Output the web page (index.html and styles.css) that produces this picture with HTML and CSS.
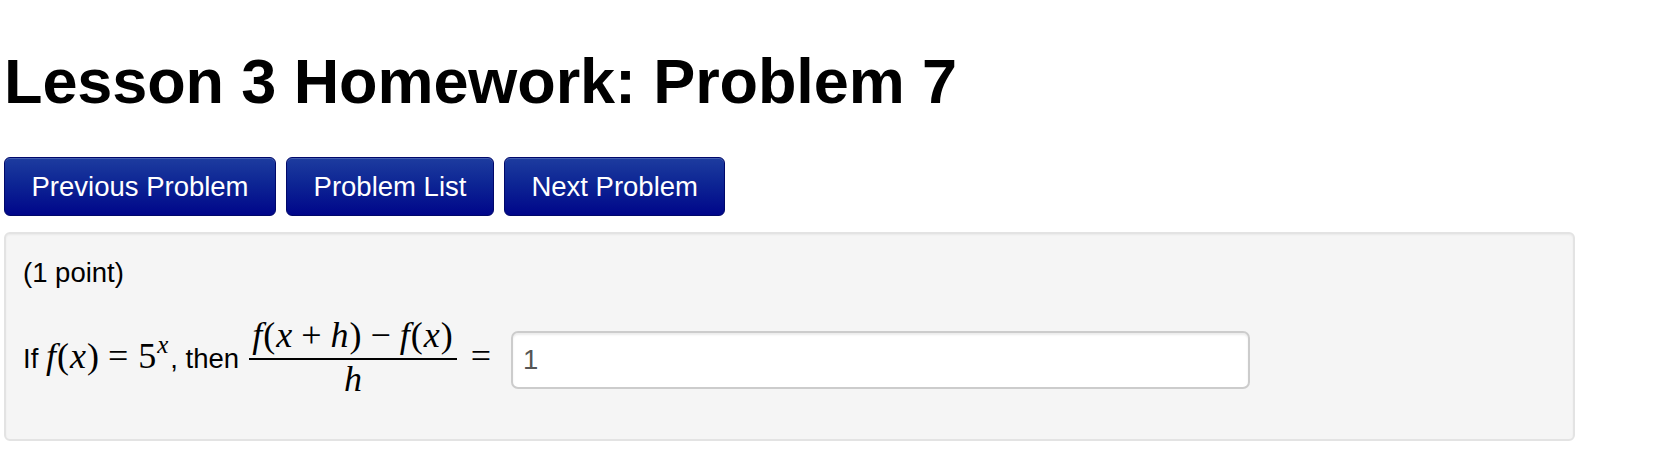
FILE: index.html
```html
<!DOCTYPE html>
<html lang="en">
<head>
<meta charset="utf-8">
<title>Lesson 3 Homework: Problem 7</title>
<link rel="stylesheet" href="styles.css">
</head>
<body>
<div class="page">
  <h1 class="title">Lesson 3 Homework: Problem 7</h1>
  <div class="nav">
    <a class="btn" href="#">Previous Problem</a>
    <a class="btn" href="#">Problem List</a>
    <a class="btn" href="#">Next Problem</a>
  </div>
  <div class="well">
    <div class="points">(1 point)</div>
    <div class="statement">
      <span class="txt">If <span class="m m-fx"><i>f</i>(<i>x</i>)</span><span class="m m-eq">=</span><span class="m">5<sup class="sup"><i>x</i></sup></span>, then</span>
      <span class="frac">
        <span class="num m"><i>f</i>(<i>x</i><span class="bin">+</span><i>h</i>)<span class="bin">−</span><i>f</i>(<i>x</i>)</span>
        <span class="den m"><i>h</i></span>
      </span>
      <span class="txt"><span class="m">=</span></span>
      <input class="answer" type="text" value="1">
    </div>
  </div>
</div>
</body>
</html>
```

FILE: styles.css
```css
html, body {
  margin: 0;
  padding: 0;
  background: #ffffff;
}

.page {
  padding: 0 0 0 4px;
  width: 1571px;
  font-family: "Liberation Sans", Arial, Helvetica, sans-serif;
  color: #000;
}

.title {
  margin: 50px 0 44px 0;
  font-size: 63px;
  line-height: 63px;
  font-weight: bold;
  letter-spacing: -0.1px;
}

.nav {
  display: flex;
  gap: 10px;
  margin-bottom: 16px;
}

.btn {
  display: block;
  box-sizing: border-box;
  height: 59px;
  line-height: 57px;
  padding: 0 26.5px;
  font-size: 27.5px;
  color: #ffffff;
  text-decoration: none;
  border: 1px solid #00086a;
  border-radius: 6px;
  background: linear-gradient(to bottom, #1d3c9f 0%, #0d2594 45%, #00068a 100%);
  box-shadow: inset 0 1px 0 rgba(255, 255, 255, 0.18);
}

.well {
  box-sizing: border-box;
  width: 1571px;
  height: 209px;
  padding: 19px 17px 0 17px;
  background: #f5f5f5;
  border: 2px solid #e3e3e3;
  border-radius: 6px;
  box-shadow: inset 0 1px 2px rgba(0, 0, 0, 0.05);
}

.points {
  font-size: 27.5px;
  line-height: 40px;
}

.statement {
  display: flex;
  align-items: center;
  margin-top: 24px;
  font-size: 27.5px;
}

.txt {
  line-height: 40px;
  padding-bottom: 3px;
  white-space: pre;
}

.m {
  font-family: "Liberation Serif", "Times New Roman", serif;
  font-size: 36px;
  line-height: 36px;
}

.m i {
  font-style: italic;
}

.m-fx {
  letter-spacing: 1px;
}

.m-eq {
  margin: 0 10px 0 8px;
}

.sup {
  font-size: 25px;
  line-height: 0;
  vertical-align: 15px;
  margin-left: 1px;
  margin-right: 2px;
}

.frac {
  display: inline-flex;
  flex-direction: column;
  align-items: stretch;
  margin: 0 14px 0 10px;
}

.num {
  display: block;
  text-align: center;
  padding: 0 3px 5px 3px;
  border-bottom: 2px solid #000;
  letter-spacing: 1px;
}

.bin {
  font-style: normal;
  margin: 0 8px;
}

.den {
  display: block;
  text-align: center;
  padding: 1px 0 6px 0;
}

.answer {
  box-sizing: border-box;
  width: 739px;
  height: 58px;
  margin: 0 0 0 20px;
  padding: 0 10px;
  font-family: "Liberation Sans", Arial, Helvetica, sans-serif;
  font-size: 27.5px;
  color: #555555;
  background: #ffffff;
  border: 2px solid #cccccc;
  border-radius: 7px;
  box-shadow: inset 0 2px 2px rgba(0, 0, 0, 0.075);
  outline: none;
}
```
